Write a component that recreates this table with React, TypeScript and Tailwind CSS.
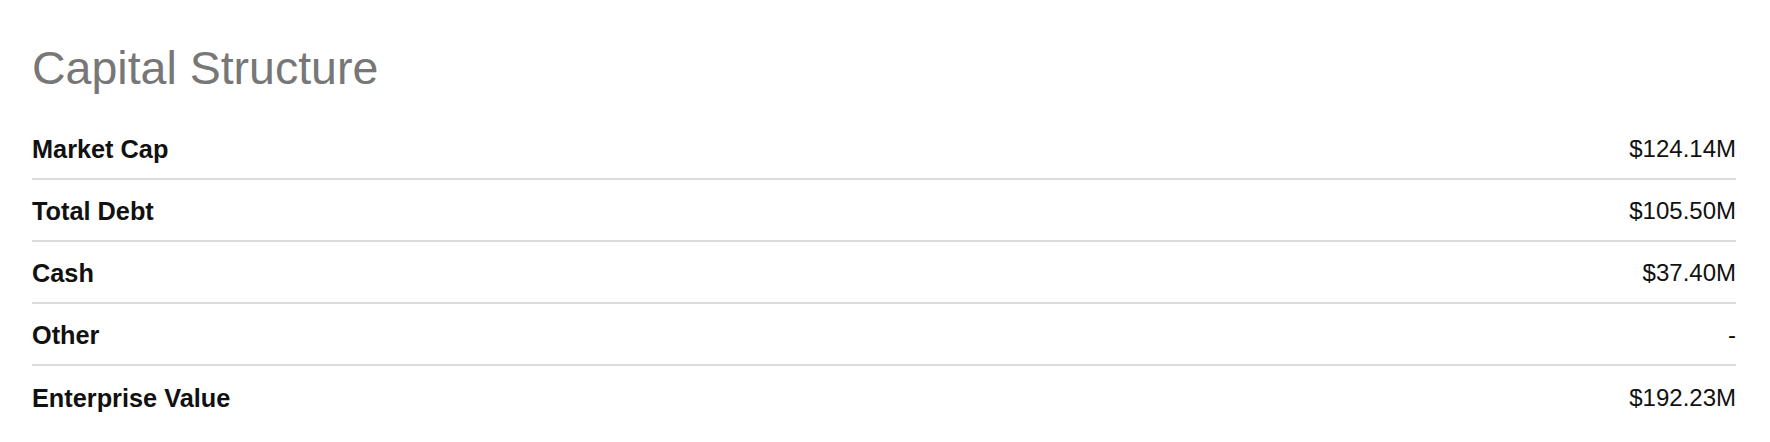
import React from "react";

const rows: [string, string][] = [
  ["Market Cap", "$124.14M"],
  ["Total Debt", "$105.50M"],
  ["Cash", "$37.40M"],
  ["Other", "-"],
  ["Enterprise Value", "$192.23M"],
];

export default function App() {
  return (
    <div
      className="w-[1770px] h-[442px] bg-white pl-8 pr-[34px] pt-[45px]"
      style={{ fontFamily: '"Liberation Sans", Arial, sans-serif' }}
    >
      <h2 className="text-[46.5px] leading-none text-[#777777] font-normal">
        Capital Structure
      </h2>
      <div className="mt-[26.5px] flex flex-col">
        {rows.map(([label, value], i) => (
          <div
            key={label}
            className={
              i < rows.length - 1
                ? "h-[62px] flex items-center justify-between pt-[2px] border-b-2 border-[#dcdcdc]"
                : "h-[62px] flex items-center justify-between pt-[2px]"
            }
          >
            <span className="text-[25.3px] leading-[30px] font-bold text-[#111111]">
              {label}
            </span>
            <span className="text-[24px] leading-[30px] text-[#111111]">
              {value}
            </span>
          </div>
        ))}
      </div>
    </div>
  );
}
